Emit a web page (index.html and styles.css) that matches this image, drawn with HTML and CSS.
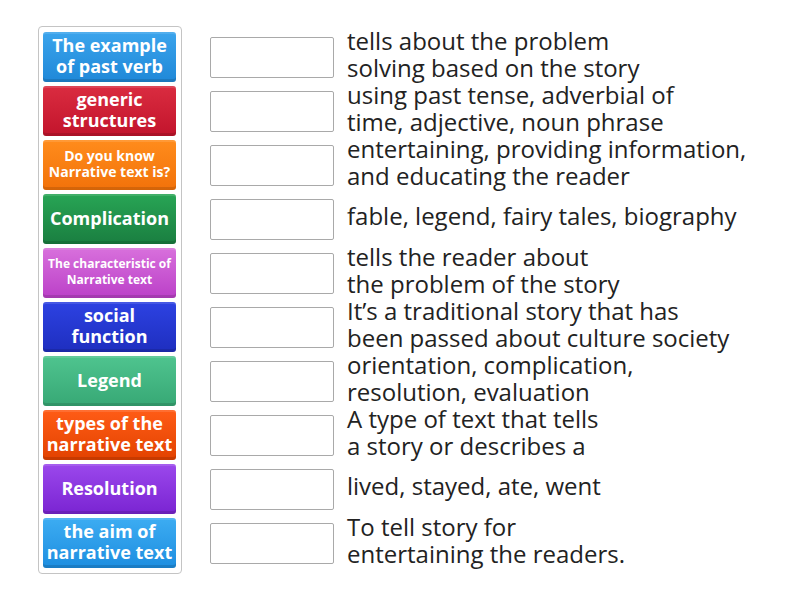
FILE: index.html
```html
<!DOCTYPE html>
<html>
<head>
<meta charset="utf-8">
<link rel="stylesheet" href="styles.css">
</head>
<body>
<div class="page">
  <div class="bank">
    <div class="tile c1">The example of past verb</div>
    <div class="tile c2">generic structures</div>
    <div class="tile c3 small">Do you know Narrative text is?</div>
    <div class="tile c4">Complication</div>
    <div class="tile c5 small tiny">The characteristic of Narrative text</div>
    <div class="tile c6">social function</div>
    <div class="tile c7">Legend</div>
    <div class="tile c8">types of the narrative text</div>
    <div class="tile c9">Resolution</div>
    <div class="tile c10">the aim of narrative text</div>
  </div>
  <div class="rows">
    <div class="row"><div class="slot"></div><div class="def">tells about the problem<br>solving based on the story</div></div>
    <div class="row"><div class="slot"></div><div class="def">using past tense, adverbial of<br>time, adjective, noun phrase</div></div>
    <div class="row"><div class="slot"></div><div class="def">entertaining, providing information,<br>and educating the reader</div></div>
    <div class="row"><div class="slot"></div><div class="def">fable, legend, fairy tales, biography</div></div>
    <div class="row"><div class="slot"></div><div class="def">tells the reader about<br>the problem of the story</div></div>
    <div class="row"><div class="slot"></div><div class="def">It’s a traditional story that has<br>been passed about culture society</div></div>
    <div class="row"><div class="slot"></div><div class="def">orientation, complication,<br>resolution, evaluation</div></div>
    <div class="row"><div class="slot"></div><div class="def">A type of text that tells<br>a story or describes a</div></div>
    <div class="row"><div class="slot"></div><div class="def">lived, stayed, ate, went</div></div>
    <div class="row"><div class="slot"></div><div class="def">To tell story for<br>entertaining the readers.</div></div>
  </div>
</div>
</body>
</html>
```

FILE: styles.css
```css
html, body {
  margin: 0;
  padding: 0;
  background: #ffffff;
}
.page {
  display: flex;
  align-items: flex-start;
  padding: 26px 0 0 38px;
  font-family: "Open Sans", "DejaVu Sans", sans-serif;
}
.bank {
  width: 144px;
  box-sizing: border-box;
  border: 1px solid #c4c4c4;
  border-radius: 4px;
  padding: 5px 0 5px 4px;
  display: flex;
  flex-direction: column;
  gap: 4px;
}
.tile {
  width: 133px;
  height: 50px;
  box-sizing: border-box;
  border-radius: 3px;
  color: #ffffff;
  font-weight: 700;
  font-size: 18px;
  line-height: 21px;
  text-align: center;
  display: flex;
  align-items: center;
  justify-content: center;
  padding: 0 1px 2px;
  box-shadow: inset 0 -3px 0 rgba(0,0,0,0.12), inset 0 2px 0 rgba(255,255,255,0.12);
}
.tile.small {
  font-size: 14px;
  line-height: 16px;
}
.tile.tiny {
  font-size: 12px;
}
.c1 { background: linear-gradient(#3ba4ec, #1f88d8); }
.c2 { background: linear-gradient(#da2c40, #c2142c); }
.c3 { background: linear-gradient(#ff8c1c, #f2720a); }
.c4 { background: linear-gradient(#28a555, #1a7e40); }
.c5 { background: linear-gradient(#d870dc, #bb40c8); }
.c6 { background: linear-gradient(#2d42e2, #1e2ebf); }
.c7 { background: linear-gradient(#4fc48f, #37a875); }
.c8 { background: linear-gradient(#ff5c16, #e24200); }
.c9 { background: linear-gradient(#9b48ec, #7a24d2); }
.c10 { background: linear-gradient(#3cacf2, #1e8ee0); }
.rows {
  margin-left: 28px;
  padding-top: 6px;
  display: flex;
  flex-direction: column;
}
.row {
  height: 54px;
  display: flex;
  align-items: center;
}
.slot {
  width: 124px;
  height: 41px;
  box-sizing: border-box;
  border: 1px solid #a9a9a9;
  border-radius: 2px;
  background: #ffffff;
  flex: none;
  margin-top: -4px;
}
.def {
  margin-left: 13px;
  font-size: 24px;
  line-height: 27px;
  color: #222222;
  white-space: nowrap;
  margin-top: -11px;
}
```
